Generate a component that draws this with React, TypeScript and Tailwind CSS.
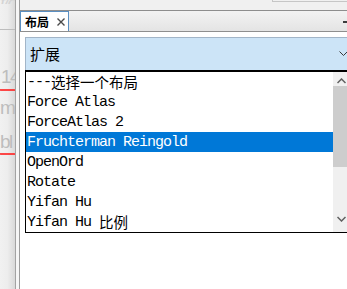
import React from "react";

const items = [
  ["---", "选择一个布局"],
  ["Force Atlas", ""],
  ["ForceAtlas 2", ""],
  ["Fruchterman Reingold", ""],
  ["OpenOrd", ""],
  ["Rotate", ""],
  ["Yifan Hu", ""],
  ["Yifan Hu ", "比例"],
];

function Squiggle() {
  return (
    <svg width="15" height="3" className="block">
      <polyline
        points="0,2 1,0 2,2 3,0 4,2 5,0 6,2 7,0 8,2 9,0 10,2 11,0 12,2 13,0 14,2 15,0"
        fill="none"
        stroke="#ff2020"
        strokeWidth="1"
      />
    </svg>
  );
}

function LeftStrip() {
  return (
    <div className="w-[15px] shrink-0 flex flex-col overflow-hidden bg-gradient-to-r from-[#f1f1f1] via-[#ededed] to-[#d9d9d9] text-[#bdbdbd] text-[19px] leading-[18px] tracking-[-1.5px] font-['Liberation_Sans',sans-serif]">
      <div className="h-[10px] overflow-hidden -mt-[6px] text-[#d4d4d4] italic">t/c</div>
      <div className="h-[20px] mt-[6px] border-b border-[#bdbdbd]"></div>
      <div className="mt-[38px] h-[18px] whitespace-nowrap pl-[1px]">14</div>
      <div className="mt-[3px]">
        <Squiggle />
      </div>
      <div className="mt-[7px] h-[18px] whitespace-nowrap">ml</div>
      <div className="mt-[16px] h-[18px] whitespace-nowrap">bl</div>
      <div className="mt-[2px]">
        <Squiggle />
      </div>
    </div>
  );
}

export default function App() {
  return (
    <div className="w-[347px] h-[289px] flex bg-white overflow-hidden">
      <LeftStrip />
      <div className="w-px shrink-0 bg-[#a3a3a3]" />
      <div className="w-[3px] shrink-0 bg-[#f6f6f6]" />
      <div className="w-px shrink-0 bg-[#9c9c9c]" />

      <div className="w-[327px] shrink-0 flex flex-col">
        {/* top strip */}
        <div className="h-[11px] shrink-0 bg-[#f0f0f0] border-b border-[#8e8e8e] flex justify-end">
          <div className="w-[75px] h-[2px] border-l border-b border-[#c6c6c6]" />
        </div>

        {/* tab bar */}
        <div className="h-[21px] shrink-0 flex items-stretch bg-gradient-to-b from-[#f3f3f3] to-[#e4e4e4] border-b border-[#8e8e8e]">
          <div className="w-[49px] flex items-center gap-[8px] pl-[4px] bg-white border-l border-r border-t border-[#5a8fc2]">
            <span className="text-[12px] font-bold leading-none text-black font-['Noto_Sans_CJK_SC',sans-serif]">
              布局
            </span>
            <svg width="8" height="8" viewBox="0 0 8 8" className="mt-px">
              <path d="M0.5 0.5 L7.5 7.5 M7.5 0.5 L0.5 7.5" stroke="#4a4a4a" strokeWidth="1.4" />
            </svg>
          </div>
          <div className="flex-1" />
          <div className="w-[4px] h-[2px] self-center bg-[#3c3c3c] mt-[1px]" />
        </div>

        {/* content */}
        <div className="flex-1 bg-white pt-[5px] pl-[5px] flex flex-col">
          {/* combo box */}
          <div className="w-[330px] h-[33px] shrink-0 flex items-center justify-between bg-[#cce4f7] border-l border-t border-[#a2b5c8] pl-[4px] pr-[10px]">
            <span className="text-[15px] text-black font-['Noto_Sans_CJK_SC',sans-serif]">扩展</span>
            <svg width="9" height="6" viewBox="0 0 9 6" className="mr-[-3px]">
              <path d="M0.5 0.5 L4.5 4.5 L8.5 0.5" fill="none" stroke="#3a3a3a" strokeWidth="1" />
            </svg>
          </div>

          {/* list */}
          <div className="w-[326px] h-[163px] shrink-0 flex border-x border-b border-t-2 border-black">
            <div className="w-[307px] flex flex-col">
              {items.map(([latin, cjk], i) => (
                <div
                  key={i}
                  className={
                    "h-[20px] flex items-center pl-[1px] whitespace-nowrap " +
                    (i === 3 ? "bg-[#0078d7] text-white" : "text-black")
                  }
                >
                  <span className="font-['Liberation_Mono',monospace] text-[15px] tracking-[-1px] leading-none whitespace-pre">
                    {latin}
                  </span>
                  {cjk && (
                    <span className="font-['Noto_Sans_CJK_SC',sans-serif] text-[14.5px] leading-none">{cjk}</span>
                  )}
                </div>
              ))}
            </div>
            <div className="w-[17px] flex flex-col bg-[#f0f0f0]">
              <div className="h-[12px] flex items-end pl-[4px]">
                <svg width="9" height="6" viewBox="0 0 9 6">
                  <path d="M0.5 5 L4.5 1 L8.5 5" fill="none" stroke="#606060" strokeWidth="1.5" />
                </svg>
              </div>
              <div className="h-[81px] mt-[2px] bg-[#cdcdcd]" />
              <div className="flex-1" />
              <div className="h-[16px] flex items-start pl-[4px]">
                <svg width="9" height="6" viewBox="0 0 9 6">
                  <path d="M0.5 1 L4.5 5 L8.5 1" fill="none" stroke="#606060" strokeWidth="1.5" />
                </svg>
              </div>
            </div>
          </div>
        </div>
      </div>
    </div>
  );
}
